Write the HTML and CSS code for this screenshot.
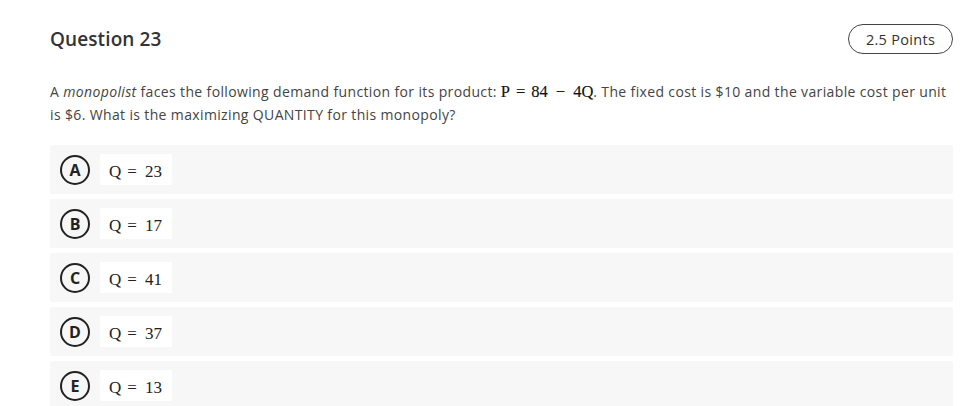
FILE: index.html
```html
<!DOCTYPE html>
<html>
<head>
<meta charset="utf-8">
<link rel="stylesheet" href="styles.css">
</head>
<body>
<div class="question">
  <div class="q-header">
    <h2 class="q-title">Question 23</h2>
    <span class="q-points">2.5 Points</span>
  </div>
  <p class="q-text">A <em>monopolist</em> faces the following demand function for its product: <span class="math">P<span class="rel">=</span>84<span class="bin">−</span>4Q</span>. The fixed cost is $10 and the variable cost per unit is $6. What is the maximizing QUANTITY for this monopoly?</p>
  <div class="options">
    <div class="option"><span class="letter">A</span><span class="answer"><span class="math-ans">Q<span class="rel">=</span>23</span></span></div>
    <div class="option"><span class="letter">B</span><span class="answer"><span class="math-ans">Q<span class="rel">=</span>17</span></span></div>
    <div class="option"><span class="letter">C</span><span class="answer"><span class="math-ans">Q<span class="rel">=</span>41</span></span></div>
    <div class="option"><span class="letter">D</span><span class="answer"><span class="math-ans">Q<span class="rel">=</span>37</span></span></div>
    <div class="option"><span class="letter">E</span><span class="answer"><span class="math-ans">Q<span class="rel">=</span>13</span></span></div>
  </div>
</div>
</body>
</html>
```
FILE: styles.css
```css
html, body {
  margin: 0;
  padding: 0;
  background: #ffffff;
}
body {
  font-family: "Open Sans", "Liberation Sans", sans-serif;
  color: #333333;
}
.question {
  padding: 24px 22px 0 50px;
}
.q-header {
  display: flex;
  justify-content: space-between;
  align-items: center;
  height: 30px;
}
.q-title {
  margin: 0;
  font-size: 19px;
  font-weight: 600;
  color: #333333;
  letter-spacing: 0.1px;
}
.q-points {
  display: inline-flex;
  align-items: center;
  justify-content: center;
  box-sizing: border-box;
  width: 105px;
  height: 30px;
  border: 1px solid #444444;
  border-radius: 15px;
  font-size: 14.5px;
  letter-spacing: 0.3px;
  color: #333333;
}
.q-text {
  margin: 26px 0 0 0;
  font-size: 14px;
  letter-spacing: 0.36px;
  line-height: 23px;
  color: #444444;
}
.math {
  font-family: "Liberation Serif", "Times New Roman", serif;
  font-size: 16.5px;
  letter-spacing: 0;
  color: #111;
  -webkit-text-stroke: 0.15px #111;
}
.math .rel {
  margin: 0 6px;
}
.math .bin {
  margin: 0 8px;
}
.options {
  margin-top: 19px;
  display: flex;
  flex-direction: column;
  gap: 5px;
}
.option {
  display: flex;
  align-items: center;
  height: 49px;
  background: #f7f7f7;
  border-radius: 2px;
  padding-left: 10px;
}
.letter {
  box-sizing: border-box;
  width: 30px;
  height: 30px;
  border: 2px solid #222222;
  border-radius: 50%;
  display: inline-flex;
  align-items: center;
  justify-content: center;
  font-size: 16px;
  font-weight: 700;
  color: #222222;
}
.answer {
  margin-left: 10px;
  width: 72px;
  height: 31px;
  background: #ffffff;
  display: inline-flex;
  align-items: center;
  padding-left: 9px;
  box-sizing: border-box;
}
.math-ans {
  font-family: "Liberation Serif", "Times New Roman", serif;
  font-size: 17px;
  color: #222;
  padding-top: 5px;
}
.math-ans .rel {
  margin: 0 8px 0 6px;
}
```
